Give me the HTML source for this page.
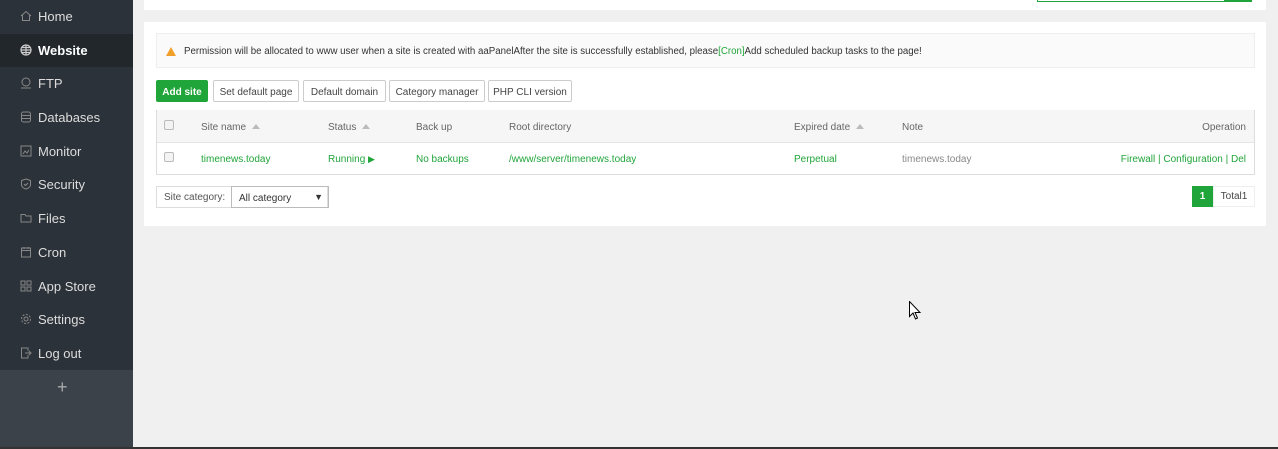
<!DOCTYPE html>
<html><head><meta charset="utf-8"><style>
*{margin:0;padding:0;box-sizing:border-box}
body{width:1278px;height:449px;overflow:hidden;background:#f0f0f0;font-family:"Liberation Sans",sans-serif;font-size:12px;color:#555;position:relative}
.side{position:absolute;left:0;top:0;width:133px;height:447px;background:#3b424a}
.menu{background:#2c3239;height:370px}
.mi{height:33.7px;line-height:33.7px;color:#ddd;font-size:13px;padding-left:38px;position:relative}
.mi.act{background:#22272c;color:#fff;font-weight:bold}
.mi svg{position:absolute;left:20px;top:10px}
.plus{position:absolute;left:57px;top:377px;color:#aaa;font-size:18px}
.p1{position:absolute;left:144px;top:0;width:1122px;height:10px;background:#fff}
.srch{position:absolute;left:1037px;top:-2px;width:188px;height:4px;border:1px solid #20a53a;background:#fff}
.sbtn{position:absolute;left:1225px;top:0;width:27px;height:2px;background:#20a53a}
.p2{position:absolute;left:144px;top:22px;width:1122px;height:204px;background:#fff}
.tip{position:absolute;left:12px;top:11px;width:1099px;height:35px;background:#fafafa;border:1px solid #eee;font-size:9.7px;color:#333;line-height:35px;padding-left:27px}
.tip .w{position:absolute;left:9px;top:13px;width:0;height:0;border-left:5px solid transparent;border-right:5px solid transparent;border-bottom:9px solid #f0a02a}
.btn{position:absolute;top:58px;height:22px;line-height:23px;border:1px solid #ccc;background:#fff;font-size:10px;color:#444;text-align:center;border-radius:2px}
.btn.g{background:#20a53a;border-color:#20a53a;color:#fff;font-weight:bold}
.tbl{position:absolute;left:12px;top:88px;width:1099px;height:65px;border:1px solid #ddd;border-top:none}
.th{position:absolute;left:0;top:0;width:100%;height:33px;background:#f6f6f6;border-bottom:1px solid #e5e5e5}
.c{position:absolute;font-size:10px;white-space:nowrap}
.th .c{top:12px;color:#666}
.tr .c{top:44px;color:#20a53a}
.cb{position:absolute;width:10px;height:10px;border:1px solid #bbb;border-radius:2px;background:#f3f3f3;left:7px}
.tri{display:inline-block;width:0;height:0;border-left:4px solid transparent;border-right:4px solid transparent;border-bottom:5px solid #bbb;margin-left:6px;vertical-align:1px}
.cat{position:absolute;left:12px;top:164px;width:172px;height:22px;border:1px solid #ddd;font-size:10px}
.pg{position:absolute;left:1048px;top:164px;height:21px}
</style></head><body>
<div class="side"><div class="menu">
<div class="mi"><svg width="12" height="12" viewBox="0 0 12 12" fill="none" stroke="#888" stroke-width="1"><path d="M1 6L6 1.5 11 6M2.5 5v5.5h7V5"/></svg>Home</div>
<div class="mi act"><svg width="12" height="12" viewBox="0 0 12 12" fill="none" stroke="#ccc" stroke-width="1.2"><circle cx="6" cy="6" r="5"/><path d="M1 6h10M6 1v10M2 3.5h8M2 8.5h8"/></svg>Website</div>
<div class="mi"><svg width="12" height="12" viewBox="0 0 12 12" fill="none" stroke="#888"><circle cx="6" cy="5" r="4"/><path d="M1 11h10"/></svg>FTP</div>
<div class="mi"><svg width="12" height="12" viewBox="0 0 12 12" fill="none" stroke="#888"><rect x="1.5" y="1" width="9" height="10" rx="2"/><path d="M1.5 4.5h9M1.5 7.5h9"/></svg>Databases</div>
<div class="mi"><svg width="12" height="12" viewBox="0 0 12 12" fill="none" stroke="#888"><rect x="1" y="1" width="10" height="10"/><path d="M3 9l2-3 2 2 2-3"/></svg>Monitor</div>
<div class="mi"><svg width="12" height="12" viewBox="0 0 12 12" fill="none" stroke="#888"><path d="M6 1l4.5 1.5v4C10.5 9 8 10.5 6 11 4 10.5 1.5 9 1.5 6.5v-4z"/><path d="M4 6l1.5 1.5L8 5"/></svg>Security</div>
<div class="mi"><svg width="12" height="12" viewBox="0 0 12 12" fill="none" stroke="#888"><path d="M1 2.5h4l1 1.5h5v6H1z"/></svg>Files</div>
<div class="mi"><svg width="12" height="12" viewBox="0 0 12 12" fill="none" stroke="#888"><rect x="1.5" y="2" width="9" height="9"/><path d="M1.5 4.5h9M4 1v2M8 1v2"/></svg>Cron</div>
<div class="mi"><svg width="12" height="12" viewBox="0 0 12 12" fill="none" stroke="#888"><rect x="1" y="1" width="4" height="4"/><rect x="7" y="1" width="4" height="4"/><rect x="1" y="7" width="4" height="4"/><rect x="7" y="7" width="4" height="4"/></svg>App Store</div>
<div class="mi"><svg width="12" height="12" viewBox="0 0 12 12" fill="none" stroke="#888"><circle cx="6" cy="6" r="2"/><circle cx="6" cy="6" r="4.5" stroke-dasharray="2 1.5"/></svg>Settings</div>
<div class="mi"><svg width="12" height="12" viewBox="0 0 12 12" fill="none" stroke="#888"><path d="M8 4V1H1.5v10H8V8M5 6h6M9 4l2 2-2 2"/></svg>Log out</div>
</div><div class="plus">+</div></div>
<div style="position:absolute;left:0;top:447px;width:1278px;height:2px;background:#333"></div>
<div class="p1"></div><div class="srch"></div><div class="sbtn"></div>
<div class="p2">
<div class="tip"><span class="w"></span>Permission will be allocated to www user when a site is created with aaPanelAfter the site is successfully established, please<span style="color:#20a53a">[Cron]</span>Add scheduled backup tasks to the page!</div>
<div class="btn g" style="left:12px;width:52px">Add site</div>
<div class="btn" style="left:69px;width:86px">Set default page</div>
<div class="btn" style="left:159px;width:83px">Default domain</div>
<div class="btn" style="left:245px;width:96px">Category manager</div>
<div class="btn" style="left:344px;width:84px">PHP CLI version</div>
<div class="tbl">
<div class="th"><span class="cb" style="top:10px"></span>
<span class="c" style="left:44px">Site name<i class="tri"></i></span>
<span class="c" style="left:171px">Status<i class="tri"></i></span>
<span class="c" style="left:259px">Back up</span>
<span class="c" style="left:352px">Root directory</span>
<span class="c" style="left:637px">Expired date<i class="tri"></i></span>
<span class="c" style="left:745px">Note</span>
<span class="c" style="right:8px">Operation</span></div>
<div class="tr"><span class="cb" style="top:42px"></span>
<span class="c" style="left:44px">timenews.today</span>
<span class="c" style="left:171px">Running <span style="font-size:9px">▶</span></span>
<span class="c" style="left:259px">No backups</span>
<span class="c" style="left:352px">/www/server/timenews.today</span>
<span class="c" style="left:637px">Perpetual</span>
<span class="c" style="left:745px;color:#888">timenews.today</span>
<span class="c" style="right:8px">Firewall | Configuration | Del</span></div>
</div>
<div class="cat"><span style="position:absolute;left:7px;top:5px;color:#555">Site category:</span><div style="position:absolute;left:74px;top:-1px;width:98px;height:22px;border:1px solid #bbb;padding:6px 0 0 7px;color:#333">All category<span style="position:absolute;right:5px;top:5px;font-size:9px">▼</span></div></div>
<div class="pg"><span style="position:absolute;left:0;top:0;width:21px;height:21px;background:#20a53a;color:#fff;font-weight:bold;font-size:10px;text-align:center;line-height:21px">1</span><span style="position:absolute;left:21px;top:0;width:42px;height:21px;border:1px solid #eee;font-size:10px;line-height:19px;text-align:center;color:#444">Total1</span></div>
</div>
<svg style="position:absolute;left:909px;top:301px" width="13" height="20" viewBox="0 0 13 20"><path d="M0.5 0.5v15l3.5-3.5 2.5 6 2-1-2.5-5.5h5z" fill="#fff" stroke="#000"/></svg>
</body></html>
